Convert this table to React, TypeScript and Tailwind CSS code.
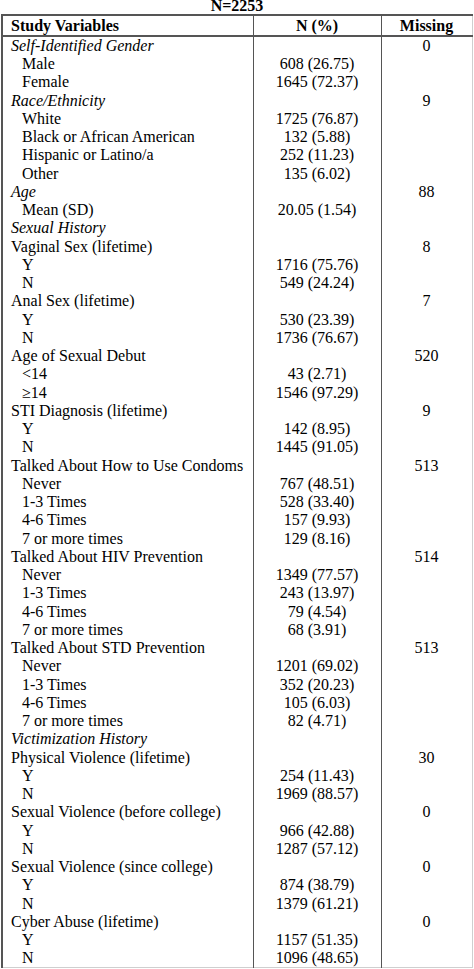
type Row = {
  label: string;
  n?: string;
  missing?: string;
  indent?: boolean;
  italic?: boolean;
};

const rows: Row[] = [
  { label: 'Self-Identified Gender', missing: '0', italic: true },
  { label: 'Male', n: '608 (26.75)', indent: true },
  { label: 'Female', n: '1645 (72.37)', indent: true },
  { label: 'Race/Ethnicity', missing: '9', italic: true },
  { label: 'White', n: '1725 (76.87)', indent: true },
  { label: 'Black or African American', n: '132 (5.88)', indent: true },
  { label: 'Hispanic or Latino/a', n: '252 (11.23)', indent: true },
  { label: 'Other', n: '135 (6.02)', indent: true },
  { label: 'Age', missing: '88', italic: true },
  { label: 'Mean (SD)', n: '20.05 (1.54)', indent: true },
  { label: 'Sexual History', italic: true },
  { label: 'Vaginal Sex (lifetime)', missing: '8' },
  { label: 'Y', n: '1716 (75.76)', indent: true },
  { label: 'N', n: '549 (24.24)', indent: true },
  { label: 'Anal Sex (lifetime)', missing: '7' },
  { label: 'Y', n: '530 (23.39)', indent: true },
  { label: 'N', n: '1736 (76.67)', indent: true },
  { label: 'Age of Sexual Debut', missing: '520' },
  { label: '<14', n: '43 (2.71)', indent: true },
  { label: '≥14', n: '1546 (97.29)', indent: true },
  { label: 'STI Diagnosis (lifetime)', missing: '9' },
  { label: 'Y', n: '142 (8.95)', indent: true },
  { label: 'N', n: '1445 (91.05)', indent: true },
  { label: 'Talked About How to Use Condoms', missing: '513' },
  { label: 'Never', n: '767 (48.51)', indent: true },
  { label: '1-3 Times', n: '528 (33.40)', indent: true },
  { label: '4-6 Times', n: '157 (9.93)', indent: true },
  { label: '7 or more times', n: '129 (8.16)', indent: true },
  { label: 'Talked About HIV Prevention', missing: '514' },
  { label: 'Never', n: '1349 (77.57)', indent: true },
  { label: '1-3 Times', n: '243 (13.97)', indent: true },
  { label: '4-6 Times', n: '79 (4.54)', indent: true },
  { label: '7 or more times', n: '68 (3.91)', indent: true },
  { label: 'Talked About STD Prevention', missing: '513' },
  { label: 'Never', n: '1201 (69.02)', indent: true },
  { label: '1-3 Times', n: '352 (20.23)', indent: true },
  { label: '4-6 Times', n: '105 (6.03)', indent: true },
  { label: '7 or more times', n: '82 (4.71)', indent: true },
  { label: 'Victimization History', italic: true },
  { label: 'Physical Violence (lifetime)', missing: '30' },
  { label: 'Y', n: '254 (11.43)', indent: true },
  { label: 'N', n: '1969 (88.57)', indent: true },
  { label: 'Sexual Violence (before college)', missing: '0' },
  { label: 'Y', n: '966 (42.88)', indent: true },
  { label: 'N', n: '1287 (57.12)', indent: true },
  { label: 'Sexual Violence (since college)', missing: '0' },
  { label: 'Y', n: '874 (38.79)', indent: true },
  { label: 'N', n: '1379 (61.21)', indent: true },
  { label: 'Cyber Abuse (lifetime)', missing: '0' },
  { label: 'Y', n: '1157 (51.35)', indent: true },
  { label: 'N', n: '1096 (48.65)', indent: true },
];

export default function App() {
  return (
    <div className="h-[969px] w-[474px] overflow-hidden bg-white font-['Liberation_Serif','Times_New_Roman',serif] text-[16px] text-black">
      <div className="mt-[-2px] text-center font-bold leading-[16px]">N=2253</div>
      <table className="ml-[1px] w-[470px] table-fixed border-collapse">
        <colgroup>
          <col className="w-[251px]" />
          <col className="w-[128px]" />
          <col className="w-[91px]" />
        </colgroup>
        <thead>
          <tr className="h-[21px] border-t-2 border-b-2 border-[#555] font-bold">
            <th className="border-l-2 border-[#555] pl-[8px] text-left font-bold leading-[18px]">Study Variables</th>
            <th className="border-l border-[#555] text-center font-bold leading-[18px]">N (%)</th>
            <th className="border-l border-r border-[#555] border-r-[#cfcfcf] text-center font-bold leading-[18px]">Missing</th>
          </tr>
        </thead>
        <tbody className="border-b border-[#cfcfcf]">
          {rows.map((r, i) => (
            <tr key={i} className="h-[18.26px]">
              <td
                className={`border-l-2 border-[#555] p-0 leading-[18px] whitespace-nowrap ${r.indent ? 'pl-[19px]' : 'pl-[8px]'} ${r.italic ? 'italic' : ''}`}
              >
                {r.label}
              </td>
              <td className="border-l border-[#555] p-0 text-center leading-[18px] whitespace-nowrap">{r.n}</td>
              <td className="border-l border-r border-[#555] border-r-[#cfcfcf] p-0 text-center leading-[18px]">{r.missing}</td>
            </tr>
          ))}
        </tbody>
      </table>
    </div>
  );
}
